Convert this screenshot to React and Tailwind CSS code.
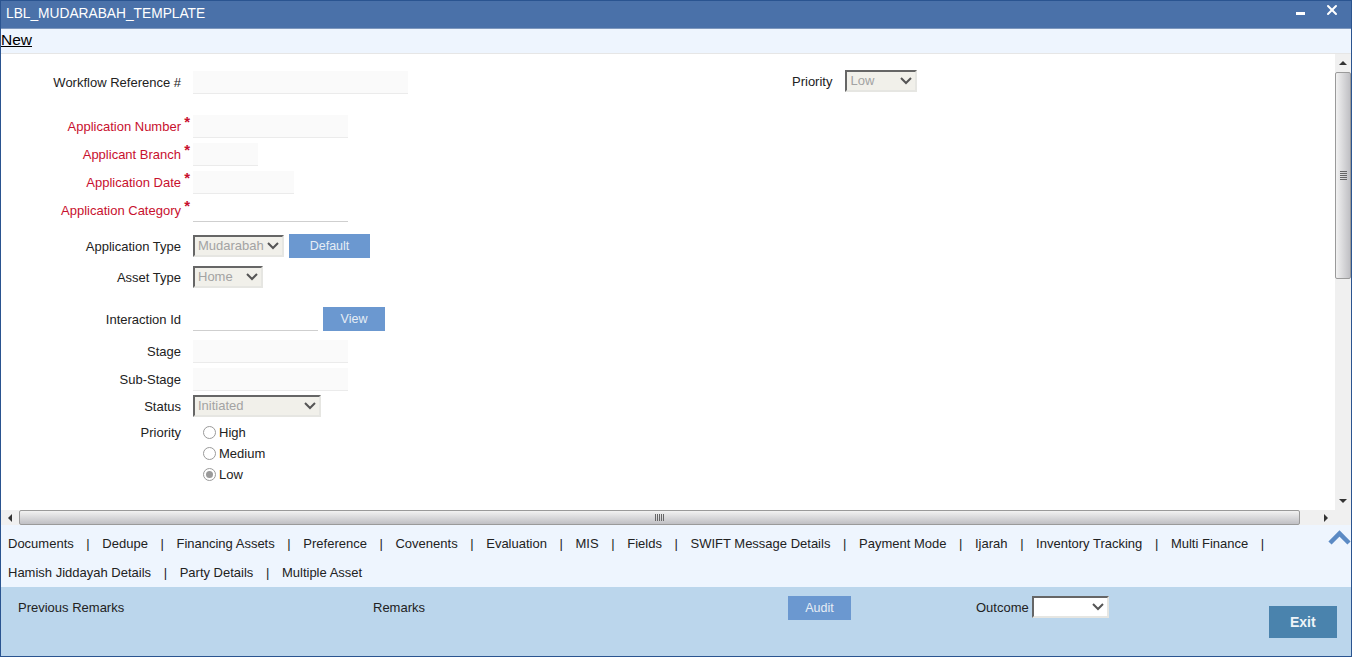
import { X } from 'lucide-react';

const row1 = ['Documents', 'Dedupe', 'Financing Assets', 'Preference', 'Covenents', 'Evaluation', 'MIS', 'Fields', 'SWIFT Message Details', 'Payment Mode', 'Ijarah', 'Inventory Tracking', 'Multi Finance'];
const row2 = ['Hamish Jiddayah Details', 'Party Details', 'Multiple Asset'];

function Chevron({ color = '#555' }) {
  return (
    <svg width="12" height="8" viewBox="0 0 12 8" className="mr-[1px] shrink-0">
      <path d="M1 1 L6 6 L11 1" fill="none" stroke={color} strokeWidth="2" />
    </svg>
  );
}

function Select({ value, className }) {
  return (
    <div className={`flex h-[22px] items-center justify-between border-2 border-t-[#666] border-l-[#666] border-r-[#e6e6e2] border-b-[#e6e6e2] bg-[#f1f0ea] pr-[2px] pl-[3px] text-[#a3a3a3] ${className}`}>
      <span>{value}</span>
      <Chevron />
    </div>
  );
}

function Label({ children, required, className = '' }) {
  return (
    <div className={`flex w-[180px] shrink-0 justify-end ${required ? 'text-[#c8102e]' : ''} ${className}`}>
      <span className="relative">
        {children}
        {required && <span className="absolute top-[-6px] right-[-9px] text-[15px] font-bold text-[#c8102e]">*</span>}
      </span>
    </div>
  );
}

function Input({ className }) {
  return <div className={`h-[23px] border-b border-[#ebebeb] bg-[#fafafa] ${className}`} />;
}

function Row({ label, required, className, labelClassName, children }) {
  return (
    <div className={`flex items-center gap-3 ${className}`}>
      <Label required={required} className={labelClassName}>{label}</Label>
      {children}
    </div>
  );
}

function Btn({ children, className }) {
  return (
    <div className={`flex h-6 items-center justify-center bg-[#6b98d0] pt-[1px] text-[12.5px] text-[#e6edf5] ${className}`}>
      {children}
    </div>
  );
}

function Radio({ label, checked }) {
  return (
    <div className="flex h-[21px] items-center gap-[3px]">
      <span className="flex h-[13px] w-[13px] items-center justify-center rounded-full border border-[#9a9a9a] bg-white">
        {checked && <span className="h-[7px] w-[7px] rounded-full bg-[#9a9a9a]" />}
      </span>
      <span>{label}</span>
    </div>
  );
}

function TabRow({ items, trailing, className }) {
  return (
    <div className={`flex items-center gap-[12.6px] ${className}`}>
      {items.map((item, i) => (
        <div key={item} className="flex items-center gap-[12.6px]">
          <span>{item}</span>
          {(i < items.length - 1 || trailing) && <span>|</span>}
        </div>
      ))}
    </div>
  );
}

export default function App() {
  return (
    <div className="flex h-[657px] w-[1352px] flex-col overflow-hidden border-x border-b border-[#2a5490] bg-white font-['Liberation_Sans',sans-serif] text-[13px] text-[#222]">
      {/* Title bar */}
      <div className="flex h-[29px] shrink-0 items-center justify-between border-t border-b border-t-[#2a5490] border-b-[#7d97bd] bg-[#4a71a9] pr-[11px] pl-[5px] text-[13.75px] text-white">
        <span>LBL_MUDARABAH_TEMPLATE</span>
        <div className="flex items-start gap-[19px] self-start pt-[1px]">
          <span className="mt-[10px] h-[3px] w-[9px] bg-white" />
          <X size={16} strokeWidth={3} />
        </div>
      </div>

      {/* Toolbar */}
      <div className="flex h-[25px] shrink-0 items-center border-b border-[#e6e6e6] bg-[#eef5fe] pb-[2px] text-[15.5px] text-black underline">
        New
      </div>

      {/* Form + vertical scrollbar */}
      <div className="flex h-[456px] shrink-0">
        <div className="flex min-w-0 flex-1 pt-[17px]">
          <div className="flex w-[791px] shrink-0 flex-col">
            <Row label="Workflow Reference #"><Input className="w-[215px]" /></Row>
            <Row label="Application Number" required className="mt-[21px]"><Input className="w-[155px]" /></Row>
            <Row label="Applicant Branch" required className="mt-[5px]"><Input className="w-[65px]" /></Row>
            <Row label="Application Date" required className="mt-[5px]"><Input className="w-[101px]" /></Row>
            <Row label="Application Category" required className="mt-[5px]">
              <div className="h-[23px] w-[155px] border-b border-[#cfcfcf]" />
            </Row>
            <Row label="Application Type" className="mt-3" labelClassName="pt-[2px]">
              <Select value="Mudarabah" className="w-[91px]" />
              <Btn className="-ml-[7px] w-[81px]">Default</Btn>
            </Row>
            <Row label="Asset Type" className="mt-2" labelClassName="pt-[2px]"><Select value="Home" className="w-[70px]" /></Row>
            <Row label="Interaction Id" className="mt-[19px]" labelClassName="pt-[2px]">
              <div className="h-6 w-[125px] border-b border-[#cfcfcf]" />
              <Btn className="-ml-[7px] w-[62px]">View</Btn>
            </Row>
            <Row label="Stage" className="mt-[9px]"><Input className="w-[155px]" /></Row>
            <Row label="Sub-Stage" className="mt-[5px]"><Input className="w-[155px]" /></Row>
            <Row label="Status" className="mt-1" labelClassName="pt-[2px]"><Select value="Initiated" className="w-[128px]" /></Row>
            <div className="mt-[5px] flex gap-3">
              <div className="pt-[1px]"><Label>Priority</Label></div>
              <div className="flex flex-col pl-[10px]">
                <Radio label="High" />
                <Radio label="Medium" />
                <Radio label="Low" checked />
              </div>
            </div>
          </div>
          <div className="flex h-[22px] items-center gap-[13px]">
            <span>Priority</span>
            <Select value="Low" className="-mt-[2px] w-[72px]" />
          </div>
        </div>

        {/* Vertical scrollbar */}
        <div className="flex w-[16px] shrink-0 flex-col bg-[#f0f0f0]">
          <div className="flex h-[18px] items-center justify-center">
            <span className="h-0 w-0 border-x-[4px] border-b-[4px] border-x-transparent border-b-[#333]" />
          </div>
          <div className="flex h-[207px] items-center justify-center rounded-[2px] border border-[#9a9a9a] bg-gradient-to-r from-[#f2f2f2] to-[#c0c0c4]">
            <span className="h-[9px] w-[7px] bg-[repeating-linear-gradient(to_bottom,#666_0px,#666_1px,transparent_1px,transparent_2px)]" />
          </div>
          <div className="flex-1" />
          <div className="flex h-[18px] items-center justify-center">
            <span className="h-0 w-0 border-x-[4px] border-t-[4px] border-x-transparent border-t-[#333]" />
          </div>
        </div>
      </div>

      {/* Horizontal scrollbar */}
      <div className="flex h-[15px] shrink-0 items-center bg-[#f0f0f0]">
        <div className="flex w-[18px] shrink-0 justify-center">
          <span className="h-0 w-0 border-y-[4px] border-r-[4px] border-y-transparent border-r-[#333]" />
        </div>
        <div className="flex h-[15px] w-[1281px] shrink-0 items-center justify-center rounded-[2px] border border-[#9a9a9a] bg-gradient-to-b from-[#f2f2f2] to-[#c0c0c4]">
          <span className="h-[7px] w-[9px] bg-[repeating-linear-gradient(to_right,#666_0px,#666_1px,transparent_1px,transparent_2px)]" />
        </div>
        <div className="flex flex-1 justify-center">
          <span className="h-0 w-0 border-y-[4px] border-l-[4px] border-y-transparent border-l-[#333]" />
        </div>
      </div>

      {/* Tabs */}
      <div className="relative h-[62px] shrink-0 bg-[#eef5fe] pt-[9px] pl-[7px]">
        <TabRow items={row1} trailing className="h-5" />
        <TabRow items={row2} className="mt-[9px] h-5" />
        <svg width="23" height="15" viewBox="0 0 23 15" className="absolute top-[5px] right-0">
          <path d="M2 13 L11.5 3.5 L21 13" fill="none" stroke="#5b8ac4" strokeWidth="4.5" />
        </svg>
      </div>

      {/* Footer */}
      <div className="flex flex-1 items-start bg-[#bbd6ec] pt-[9px]">
        <span className="mt-[2px] ml-[17px] w-[355px]">Previous Remarks</span>
        <span className="mt-[2px] w-[415px]">Remarks</span>
        <Btn className="w-[63px]">Audit</Btn>
        <span className="mt-[2px] ml-[125px]">Outcome</span>
        <div className="ml-[3px] flex h-[22px] w-[77px] items-center justify-end border-2 border-t-[#666] border-l-[#666] border-r-[#e6e6e2] border-b-[#e6e6e2] bg-white pr-[2px]">
          <Chevron />
        </div>
        <div className="mt-[10px] ml-[160px] flex h-8 w-[68px] items-center justify-center bg-[#4a83ad] text-[14px] font-bold text-[#eef4f8]">
          Exit
        </div>
      </div>
    </div>
  );
}
